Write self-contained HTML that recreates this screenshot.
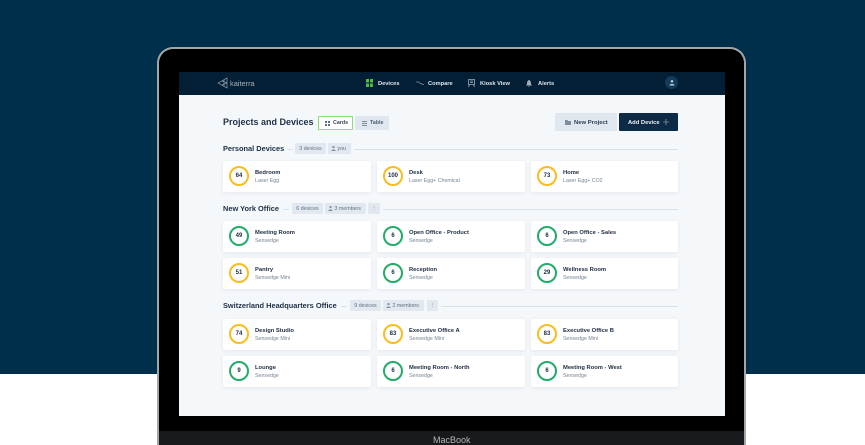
<!DOCTYPE html>
<html style="height:445px;overflow:hidden"><head><meta charset="utf-8"><style>
html,body{margin:0;padding:0}
body{width:865px;height:445px;position:relative;overflow:hidden;background:#fff;font-family:"Liberation Sans",sans-serif;color:#1a2b3f}
div,span,svg{position:absolute;box-sizing:border-box;white-space:nowrap}
#w{left:0;top:0;width:865px;height:445px;overflow:hidden;filter:blur(.3px)}
.card{width:148px;height:31px;background:#fff;border-radius:2px;box-shadow:0 1px 4px rgba(40,70,100,.09)}
.ring{left:6px;top:5px;width:20px;height:20px;border-radius:50%;border:2px solid #fbbc1e;font-size:6px;font-weight:bold;line-height:17px;text-align:center;color:#1c2c40}
.g{border-color:#22ab69}
.n{left:32px;top:8px;font-size:5.800px;font-weight:bold;color:#1c2c40;line-height:8px}
.s{left:32px;top:16px;font-size:5.300px;color:#748494;line-height:8px}
.h{font-size:7.400px;font-weight:bold;color:#1d2f45;line-height:10px}
.b{height:11px;background:#e2e8ef;border-radius:1px;font-size:5.300px;color:#5f7080;line-height:12px;text-align:center}
.l{height:1px;background:#d8e2ea}
.nv{font-size:5.700px;font-weight:bold;color:#dfe6ec;top:80px;line-height:9px}
</style></head><body><div id="w">
<div style="left:0;top:0;width:865px;height:374px;background:#002f4b"></div>
<div style="left:157px;top:47px;width:589px;height:398px;background:#000;border:2px solid #a3a6a8;border-bottom:0;border-radius:16px 16px 0 0"></div>
<div style="left:159px;top:431px;width:585px;height:14px;background:#17191d"></div>
<div style="left:433px;top:435px;font-size:9px;color:#b5b7ba;line-height:10px">MacBook</div>

<div style="left:179px;top:72px;width:546px;height:344px;background:#f5f8fb;overflow:hidden">
<div style="left:0;top:0;width:546px;height:23px;background:#021f36"></div>
</div>

<svg style="left:217px;top:77px" width="11" height="12" viewBox="0 0 11 12" fill="none" stroke="#a9b4bd" stroke-width=".6"><path d="M1 6L10 1V11ZM5 4L10 6L5 8M7 2.500V9.500"/></svg>
<div style="left:230px;top:79px;font-size:7.400px;color:#a9b4bd;line-height:9px">kaiterra</div>

<svg style="left:366px;top:79px" width="7" height="8"><path fill="#52b848" d="M0 0h3v3.500H0zM4 0h3v3.500H4zM0 4.500h3V8H0zM4 4.500h3V8H4z"/></svg>
<div class="nv" style="left:378px">Devices</div>
<svg style="left:416px;top:80px" width="8" height="6" fill="none" stroke="#7c8b98" stroke-width=".8"><path d="M0 2H3L4 3.500H5.500L6 4.500H8"/></svg>
<div class="nv" style="left:428px">Compare</div>
<svg style="left:468px;top:79px" width="7" height="8" fill="none" stroke="#a3aeb8" stroke-width=".8"><path d="M.5.500H6.500V5.500H.5ZM2 2H5M2 3.500H5M1.500 5.500L.5 8M5.500 5.500L6.500 8"/></svg>
<div class="nv" style="left:480px">Kiosk View</div>
<svg style="left:526px;top:79.500px" width="6" height="7"><path fill="#a3aeb8" d="M3 0C4.500 .5 5 2 5 4L6 5.500H0L1 4C1 2 1.500 .5 3 0ZM2.200 6H3.800L3 7Z"/></svg>
<div class="nv" style="left:538px">Alerts</div>
<div style="left:665px;top:76px;width:13px;height:13px;border-radius:50%;background:#123c5a"></div>
<svg style="left:668.500px;top:79.500px" width="6" height="6"><path fill="#b9c7d2" d="M3 0a1.300 1.300 0 1 1 0 2.600a1.300 1.300 0 1 1 0-2.600ZM.6 4.800C1 3.600 5 3.600 5.400 4.800V5.500H.6Z"/></svg>

<div style="left:223px;top:117px;font-size:9px;font-weight:bold;line-height:11px;color:#1d2f45">Projects and Devices</div>
<div style="left:318px;top:116px;width:35px;height:14px;background:#fff;border:1px solid #8fd97a;border-radius:1px"></div>
<svg style="left:325px;top:120.500px" width="5" height="5"><path fill="#5d7086" d="M0 0h2v2H0zM3 0h2v2H3zM0 3h2v2H0zM3 3h2v2H3z"/></svg>
<div style="left:333px;top:119px;font-size:5.300px;font-weight:bold;color:#33465a;line-height:8px">Cards</div>
<div style="left:355px;top:116px;width:34px;height:14px;background:#e1e7ee;border-radius:1px"></div>
<svg style="left:362px;top:120.500px" width="5" height="5"><path fill="#7d8c9b" d="M0 0h5v1H0zM0 2h5v1H0zM0 4h5v1H0z"/></svg>
<div style="left:370px;top:119px;font-size:5.300px;font-weight:bold;color:#4b5d70;line-height:8px">Table</div>

<div style="left:555px;top:113px;width:62px;height:18px;background:#e1e7ee;border-radius:1px"></div>
<svg style="left:565px;top:120px" width="6" height="5"><path fill="#7d8c9b" d="M0 0H2.500L3 1H6V5H0Z"/></svg>
<div style="left:574px;top:119px;font-size:5.900px;font-weight:bold;color:#2c3e52;line-height:8px">New Project</div>
<div style="left:619px;top:113px;width:59px;height:18px;background:#0d2b47;border-radius:1px"></div>
<div style="left:628px;top:119px;font-size:5.800px;font-weight:bold;color:#eef2f5;line-height:8px">Add Device</div>
<svg style="left:663px;top:119px" width="6" height="6"><path fill="#aab7c2" d="M2.700 0h.6v2.700H6v.6H3.300V6h-.6V3.300H0v-.6h2.700z"/></svg>

<div class="h" style="left:223px;top:144px">Personal Devices</div>
<div class="l" style="left:287px;top:149px;width:6px"></div>
<div class="b" style="left:295px;top:143px;width:31px">3 devices</div>
<div class="b" style="left:328px;top:143px;width:23px">&nbsp;&nbsp;&nbsp;you</div>
<div class="l" style="left:354px;top:148.500px;width:324px"></div>

<div class="h" style="left:223px;top:204px">New York Office</div>
<div class="l" style="left:283px;top:209px;width:6px"></div>
<div class="b" style="left:292px;top:203px;width:31px">6 devices</div>
<div class="b" style="left:325px;top:203px;width:41px">&nbsp;&nbsp;&nbsp;3 members</div>
<div class="b" style="left:368px;top:203px;width:12px">⋮</div>
<div class="l" style="left:383px;top:209px;width:295px"></div>

<div class="h" style="left:223px;top:301px">Switzerland Headquarters Office</div>
<div class="l" style="left:341px;top:306px;width:6px"></div>
<div class="b" style="left:350px;top:300px;width:31px">9 devices</div>
<div class="b" style="left:383px;top:300px;width:41px">&nbsp;&nbsp;&nbsp;2 members</div>
<div class="b" style="left:427px;top:300px;width:11px">⋮</div>
<div class="l" style="left:441px;top:306px;width:237px"></div>

<div class="card" style="left:223px;top:161px"><div class="ring">64</div><div class="n">Bedroom</div><div class="s">Laser Egg</div></div>
<div class="card" style="left:377px;top:161px"><div class="ring">100</div><div class="n">Desk</div><div class="s">Laser Egg+ Chemical</div></div>
<div class="card" style="left:531px;top:161px;width:147px"><div class="ring">73</div><div class="n">Home</div><div class="s">Laser Egg+ CO2</div></div>

<div class="card" style="left:223px;top:221px"><div class="ring g">49</div><div class="n">Meeting Room</div><div class="s">Sensedge</div></div>
<div class="card" style="left:377px;top:221px"><div class="ring g">6</div><div class="n">Open Office - Product</div><div class="s">Sensedge</div></div>
<div class="card" style="left:531px;top:221px;width:147px"><div class="ring g">6</div><div class="n">Open Office - Sales</div><div class="s">Sensedge</div></div>

<div class="card" style="left:223px;top:258px"><div class="ring">51</div><div class="n">Pantry</div><div class="s">Sensedge Mini</div></div>
<div class="card" style="left:377px;top:258px"><div class="ring g">6</div><div class="n">Reception</div><div class="s">Sensedge</div></div>
<div class="card" style="left:531px;top:258px;width:147px"><div class="ring g">29</div><div class="n">Wellness Room</div><div class="s">Sensedge</div></div>

<div class="card" style="left:223px;top:319px"><div class="ring">74</div><div class="n">Design Studio</div><div class="s">Sensedge Mini</div></div>
<div class="card" style="left:377px;top:319px"><div class="ring">83</div><div class="n">Executive Office A</div><div class="s">Sensedge Mini</div></div>
<div class="card" style="left:531px;top:319px;width:147px"><div class="ring">83</div><div class="n">Executive Office B</div><div class="s">Sensedge Mini</div></div>

<div class="card" style="left:223px;top:356px"><div class="ring g">9</div><div class="n">Lounge</div><div class="s">Sensedge</div></div>
<div class="card" style="left:377px;top:356px"><div class="ring g">6</div><div class="n">Meeting Room - North</div><div class="s">Sensedge</div></div>
<div class="card" style="left:531px;top:356px;width:147px"><div class="ring g">6</div><div class="n">Meeting Room - West</div><div class="s">Sensedge</div></div>

<svg style="left:331px;top:146px" width="5" height="5"><path fill="#7d8c9b" d="M2.500 0a1.100 1.100 0 1 1 0 2.200a1.100 1.100 0 1 1 0-2.200ZM.3 5C.6 3 4.400 3 4.700 5Z"/></svg>
<svg style="left:328px;top:206px" width="5" height="5"><path fill="#7d8c9b" d="M2.500 0a1.100 1.100 0 1 1 0 2.200a1.100 1.100 0 1 1 0-2.200ZM.3 5C.6 3 4.400 3 4.700 5Z"/></svg>
<svg style="left:386px;top:303px" width="5" height="5"><path fill="#7d8c9b" d="M2.500 0a1.100 1.100 0 1 1 0 2.200a1.100 1.100 0 1 1 0-2.200ZM.3 5C.6 3 4.400 3 4.700 5Z"/></svg>
</div></body></html>
